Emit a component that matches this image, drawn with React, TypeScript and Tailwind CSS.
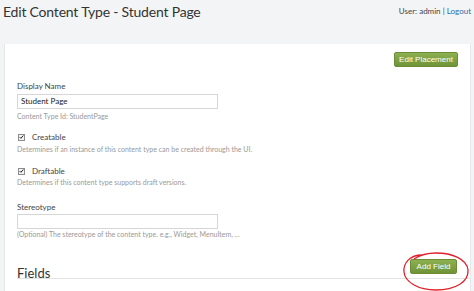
import React from 'react'

function Check({ label }: { label: string }) {
  return (
    <div className="flex items-center h-[12px] text-[8px] text-[#444]">
      <span className="flex items-center justify-center w-[7px] h-[7px] ml-[1px] mr-[7px] border border-[#8c8c8c] bg-[#f4f4f4]">
        <svg width="6" height="6" viewBox="0 0 6 6">
          <path d="M0.8 3.1 L2.3 4.6 L5.2 1.2" fill="none" stroke="#222" strokeWidth="1.2" />
        </svg>
      </span>
      {label}
    </div>
  )
}

function GreenButton({ children, w }: { children: React.ReactNode; w: string }) {
  return (
    <button
      className={`${w} h-[15px] rounded-[2px] border border-[#6c8c35] bg-gradient-to-b from-[#8db050] to-[#6f9437] text-white text-[8px] leading-none font-['Liberation_Sans',Arial,sans-serif]`}
    >
      {children}
    </button>
  )
}

export default function App() {
  return (
    <div className="w-[474px] h-[291px] overflow-hidden relative bg-[#f3f4f6] text-[9px] leading-[12px] font-['Lato',sans-serif]">
      {/* Header */}
      <header className="h-[44px] flex justify-between items-start">
        <h1 className="pl-[3px] pt-[1px] text-[14px] leading-[22px] tracking-[-0.2px] text-[#333]">
          Edit Content Type - Student Page
        </h1>
        <div className="pt-[5px] pr-[3px] text-[8px] leading-[12px] text-[#444]">
          User: admin | <a className="text-[#2a6ca8]">Logout</a>
        </div>
      </header>

      {/* Panel */}
      <main className="ml-[4px] w-[467px] h-[250px] bg-white border-l border-r border-[#e6e7e9] pl-[12px] pr-[12px] pt-[8px]">
        <div className="flex justify-end">
          <GreenButton w="w-[64px]">Edit Placement</GreenButton>
        </div>

        <div className="mt-[13px] h-[12px] text-[8px] leading-[12px] text-[#444]">Display Name</div>
        <div className="mt-[2px] w-[201px] h-[15px] border border-[#d6d6d6] pl-[3px] text-[8px] leading-[13px] text-[#222]">
          Student Page
        </div>
        <div className="mt-[2px] h-[11px] text-[7px] leading-[11px] text-[#999]">
          Content Type Id: StudentPage
        </div>

        <div className="mt-[9px]">
          <Check label="Creatable" />
        </div>
        <div className="mt-[1px] h-[11px] text-[7px] leading-[11px] text-[#999]">
          Determines if an instance of this content type can be created through the UI.
        </div>

        <div className="mt-[10px]">
          <Check label="Draftable" />
        </div>
        <div className="h-[11px] text-[7px] leading-[11px] text-[#999]">
          Determines if this content type supports draft versions.
        </div>

        <div className="mt-[13px] h-[12px] text-[8px] leading-[12px] text-[#444]">Stereotype</div>
        <div className="mt-[1px] w-[201px] h-[15px] border border-[#d6d6d6]" />
        <div className="h-[11px] text-[7px] leading-[11px] text-[#999]">
          (Optional) The stereotype of the content type. e.g., Widget, MenuItem, ...
        </div>

        <div className="mt-[19px] -mr-[12px] pr-[13px] flex justify-between items-end border-b border-[#e4e4e4]">
          <div className="text-[13px] leading-[13px] text-[#333] -mb-[2px]">Fields</div>
          <div className="flex mb-[4px]">
            <GreenButton w="w-[47px]">Add Field</GreenButton>
          </div>
        </div>
      </main>

      {/* Red hand-drawn circle */}
      <svg className="absolute left-[400px] top-[249px]" width="74" height="42" viewBox="0 0 74 42">
        <path
          d="M22 6 C10 6 3 14 4 23 C5 33 18 41 36 41 C55 41 69 33 68 21 C67 10 52 4 36 4 C28 4 20 6 14 10"
          fill="none"
          stroke="#e0202a"
          strokeWidth="1.3"
        />
      </svg>
    </div>
  )
}
